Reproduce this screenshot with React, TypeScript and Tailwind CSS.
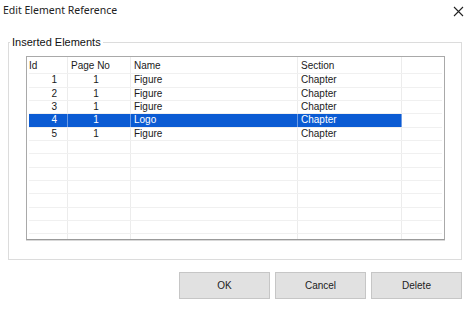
import React from "react";

const rows = [
  { id: "1", page: "1", name: "Figure", section: "Chapter" },
  { id: "2", page: "1", name: "Figure", section: "Chapter" },
  { id: "3", page: "1", name: "Figure", section: "Chapter" },
  { id: "4", page: "1", name: "Logo", section: "Chapter", sel: true },
  { id: "5", page: "1", name: "Figure", section: "Chapter" },
];

const empty = Array.from({ length: 8 });

function Row({ r }: { r?: { id: string; page: string; name: string; section: string; sel?: boolean } }) {
  const sel = r?.sel;
  const cell = sel ? "border-r border-[#6d9be3] bg-[#0b5bd3] text-white" : "border-r border-[#ececec]";
  return (
    <div className="flex h-[13.33px] shrink-0 border-b border-[#f0f0f0]">
      <div className={`flex w-[39px] items-center justify-end pr-[10px] ${cell}`}>{r?.id}</div>
      <div className={`flex w-[63px] items-center justify-center pr-[6px] ${cell}`}>{r?.page}</div>
      <div className={`flex w-[167px] items-center pl-[3px] ${cell}`}>{r?.name}</div>
      <div className={`flex w-[104px] items-center pl-[3px] ${cell}`}>{r?.section}</div>
      <div className="flex-1"></div>
    </div>
  );
}

export default function App() {
  return (
    <div className="h-[310px] w-[474px] overflow-hidden bg-white text-[#1a1a1a]" style={{ fontFamily: '"Liberation Sans", Arial, sans-serif' }}>
      <div className="flex h-[22px] items-center justify-between pl-[3px] pr-[10px]">
        <span className="text-[10.5px] text-[#222]" style={{ fontFamily: '"Noto Sans", "Open Sans", sans-serif' }}>Edit Element Reference</span>
        <svg width="11" height="11" viewBox="0 0 11 11" className="mt-[1px]">
          <path d="M1 1 L10 10 M10 1 L1 10" stroke="#222" strokeWidth="1.1" fill="none" />
        </svg>
      </div>
      <fieldset className="ml-[8px] mt-[14px] w-[454px] border border-[#dcdcdc] pb-[19px] pl-[17px] pr-[16px] pt-[8px]">
        <legend className="ml-[-16px] px-[2px] text-[11px] leading-[12px] text-[#111]">Inserted Elements</legend>
        <div className="flex h-[184px] flex-col overflow-hidden border border-[#a9a9a9] border-b-[#9a9a9a] px-[2px] text-[10px] leading-none shadow-[0_1px_0_#d8d8d8]">
          <div className="flex h-[17.33px] shrink-0 border-b border-[#f0f0f0]">
            <div className="flex w-[39px] items-center border-r border-[#ececec] pt-[2px]">Id</div>
            <div className="flex w-[63px] items-center border-r border-[#ececec] pl-[3px] pt-[2px]">Page No</div>
            <div className="flex w-[167px] items-center border-r border-[#ececec] pl-[3px] pt-[2px]">Name</div>
            <div className="flex w-[104px] items-center border-r border-[#ececec] pl-[3px] pt-[2px]">Section</div>
            <div className="flex-1"></div>
          </div>
          {rows.map((r) => (
            <Row key={r.id} r={r} />
          ))}
          {empty.map((_, i) => (
            <Row key={"e" + i} />
          ))}
        </div>
      </fieldset>
      <div className="mt-[12px] flex justify-end gap-[5px] pr-[12px]">
        {["OK", "Cancel", "Delete"].map((t) => (
          <button key={t} className="flex h-[27px] w-[91px] items-center justify-center border border-[#c6c6c6] bg-[#e1e1e1] text-[10px] text-[#222]">
            {t}
          </button>
        ))}
      </div>
    </div>
  );
}
